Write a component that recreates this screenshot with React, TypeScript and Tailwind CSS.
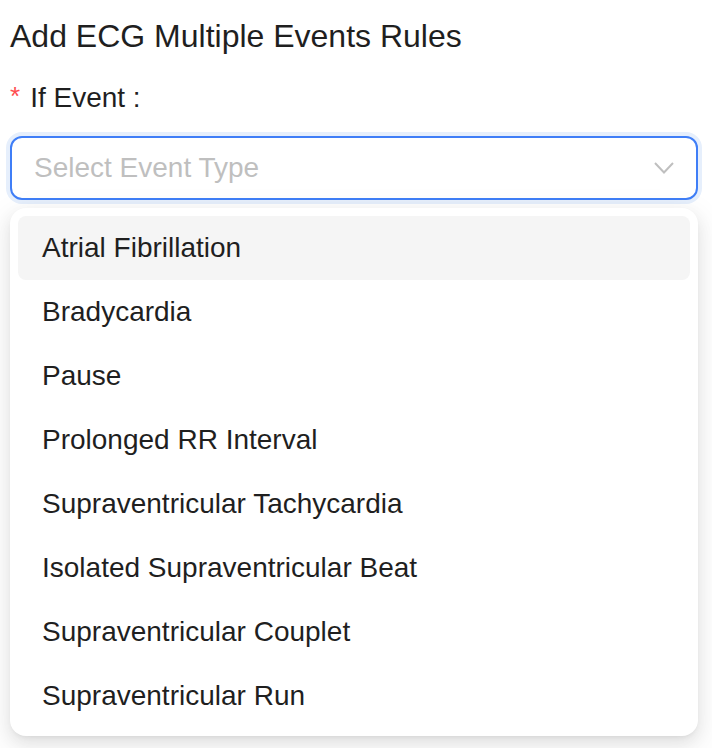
const options = [
  'Atrial Fibrillation',
  'Bradycardia',
  'Pause',
  'Prolonged RR Interval',
  'Supraventricular Tachycardia',
  'Isolated Supraventricular Beat',
  'Supraventricular Couplet',
  'Supraventricular Run',
];

export default function App() {
  return (
    <div
      className="min-h-[748px] w-[712px] bg-white pl-[10px] pr-[14px] pt-[16px] text-[#1f1f1f]"
      style={{ fontFamily: '"Liberation Sans", Arial, sans-serif' }}
    >
      {/* Title */}
      <h1 className="text-[32px] leading-[40px] font-normal">Add ECG Multiple Events Rules</h1>

      {/* Label */}
      <div className="mt-[20px] mb-[16px] flex items-center h-[44px] text-[28px]">
        <span className="text-[#ff4d4f] mr-[10px] text-[26px] leading-none -mt-[4px]">*</span>
        <span>If Event :</span>
      </div>

      {/* Select */}
      <div className="h-[64px] flex items-center justify-between rounded-[12px] border-2 border-[#3f7ef7] pl-[22px] pr-[22px] shadow-[0_0_0_4px_#e6effc] bg-white">
        <span className="text-[28px] text-[#bfbfbf]">Select Event Type</span>
        <svg width="20" height="12" viewBox="0 0 20 12">
          <polyline points="1,1 10,10.5 19,1" fill="none" stroke="#bfbfbf" strokeWidth="2" />
        </svg>
      </div>

      {/* Dropdown */}
      <div className="mt-[8px] rounded-[16px] bg-white p-[8px] shadow-[0_6px_16px_0_rgba(0,0,0,0.08),0_3px_6px_-4px_rgba(0,0,0,0.12),0_9px_28px_8px_rgba(0,0,0,0.05)]">
        {options.map((o, i) => (
          <div
            key={o}
            className={`h-[64px] flex items-center px-[24px] rounded-[8px] text-[28px] ${i === 0 ? 'bg-[#f5f5f5]' : ''}`}
          >
            {o}
          </div>
        ))}
      </div>
    </div>
  );
}
